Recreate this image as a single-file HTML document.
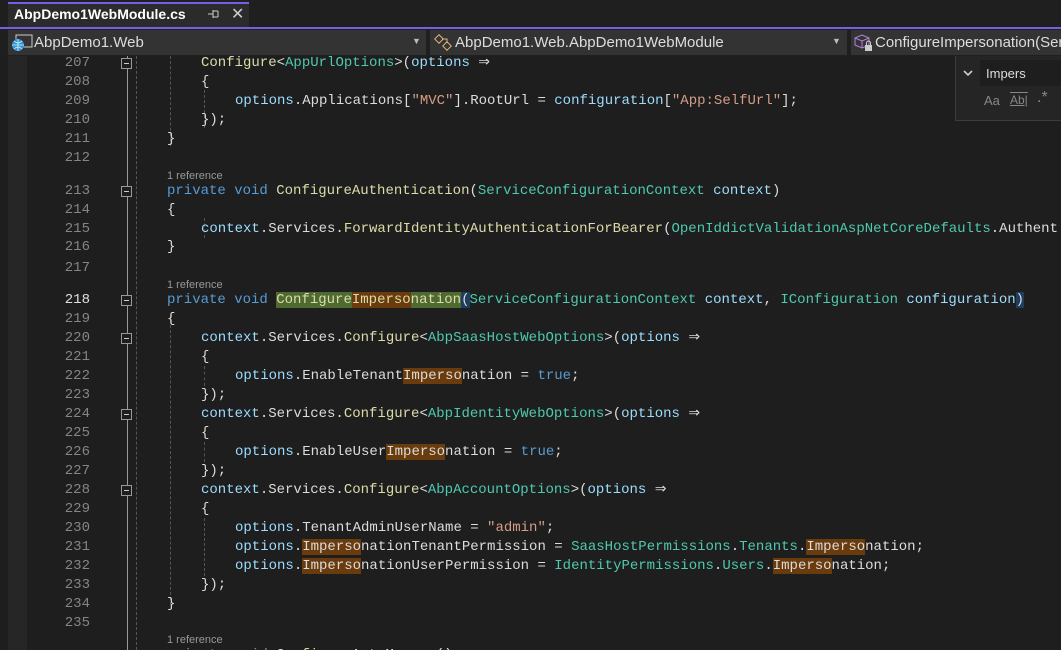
<!DOCTYPE html>
<html><head><meta charset="utf-8"><style>
*{margin:0;padding:0;box-sizing:border-box}
html,body{width:1061px;height:650px;overflow:hidden}
body{background:#1e1e1e;position:relative;font-family:"Liberation Sans",sans-serif}
.abs{position:absolute}
.ln{position:absolute;height:19px;line-height:19px;font-family:"Liberation Mono",monospace;font-size:14px;white-space:pre;color:#dcdcdc}
.num{position:absolute;width:60px;left:30px;text-align:right;height:19px;line-height:19px;font-family:"Liberation Mono",monospace;font-size:14px;color:#858585}
.k{color:#569cd6}.t{color:#4ec9b0}.m{color:#dcdcaa}.v{color:#9cdcfe}.s{color:#d69d85}
.hl{background:#6a3b0c}
.gr{background:#4e6a30}
.ref{position:absolute;left:167px;font-size:11px;color:#999;height:14px;line-height:14px}
.box{position:absolute;left:121px;width:11px;height:11px;border:1px solid #999;background:#1e1e1e}
.box:after{content:"";position:absolute;left:2px;top:4px;width:5px;height:1px;background:#ccc}
.dash{position:absolute;width:0;border-left:1px dashed #555}
</style></head><body>
<div class="abs" style="left:0;top:0;width:1061px;height:27px;background:#1f1f1f"></div>
<div class="abs" style="left:8px;top:2px;width:241px;height:26px;background:#2b2b2b;border-top:2px solid #7160e8"></div>
<div class="abs" style="left:14px;top:6px;font-size:14px;font-weight:bold;color:#fff">AbpDemo1WebModule.cs</div>
<svg class="abs" style="left:207px;top:9px" width="12" height="10"><path d="M1 5h5M6 1v8M6 2h5M6 8h5M11 2v6" stroke="#ccc" fill="none"/></svg>
<div class="abs" style="left:231px;top:4px;font-size:16px;color:#ccc">✕</div>
<div class="abs" style="left:0;top:27px;width:1061px;height:2px;background:#7160e8"></div>
<div class="abs" style="left:0;top:29px;width:1061px;height:27px;background:#1f1f1f"></div>
<div class="abs" style="left:8px;top:30px;width:418px;height:25px;background:#333"></div>
<div class="abs" style="left:430px;top:30px;width:417px;height:25px;background:#333"></div>
<div class="abs" style="left:851px;top:30px;width:210px;height:25px;background:#333"></div>
<svg class="abs" style="left:11px;top:34px" width="22" height="18"><rect x="5" y="1" width="16" height="12" fill="none" stroke="#ccc"/><circle cx="7" cy="11" r="6" fill="#3c8fd8"/><path d="M1 11h12M7 5v12M3 7q4 4 8 0M3 15q4-4 8 0" stroke="#bfe" stroke-width="0.8" fill="none"/></svg>
<div class="abs" style="left:34px;top:34px;font-size:15px;color:#ddd">AbpDemo1.Web</div>
<div class="abs" style="left:412px;top:36px;font-size:9px;color:#bbb">▼</div>
<svg class="abs" style="left:434px;top:33px" width="20" height="20"><rect x="2" y="3" width="6" height="6" transform="rotate(45 5 6)" fill="none" stroke="#dcb67a"/><rect x="10" y="10" width="6" height="6" transform="rotate(45 13 13)" fill="none" stroke="#dcb67a"/><path d="M8 6h5v4" stroke="#dcb67a" fill="none"/></svg>
<div class="abs" style="left:455px;top:34px;font-size:15px;color:#ddd">AbpDemo1.Web.AbpDemo1WebModule</div>
<div class="abs" style="left:832px;top:36px;font-size:9px;color:#bbb">▼</div>
<svg class="abs" style="left:853px;top:33px" width="22" height="20"><path d="M9 2l7 3v7l-7 3-7-3V5z M2 5l7 3 7-3M9 8v7" fill="none" stroke="#b180d7"/><rect x="12" y="12" width="7" height="6" fill="#ccc"/><path d="M13.5 12v-2a2 2 0 0 1 4 0v2" stroke="#ccc" fill="none"/></svg>
<div class="abs" style="left:875px;top:34px;font-size:15px;color:#ddd;white-space:nowrap">ConfigureImpersonation(Ser</div>
<div class="abs" style="left:8px;top:56px;width:19px;height:594px;background:#262626"></div>
<div class="abs" style="left:127px;top:56px;width:1px;height:594px;background:#999"></div>
<div class="dash" style="left:136px;top:56px;height:594px"></div>
<div class="dash" style="left:170px;top:56px;height:90px"></div>
<div class="dash" style="left:204px;top:90px;height:38px"></div>
<div class="dash" style="left:170px;top:315px;height:290px"></div>
<div class="dash" style="left:204px;top:366px;height:20px"></div>
<div class="dash" style="left:204px;top:442px;height:20px"></div>
<div class="dash" style="left:204px;top:518px;height:58px"></div>
<div class="dash" style="left:204px;top:218px;height:20px"></div>
<div class="box" style="top:58px"></div>
<div class="box" style="top:186px"></div>
<div class="box" style="top:295px"></div>
<div class="box" style="top:333px"></div>
<div class="box" style="top:409px"></div>
<div class="box" style="top:485px"></div>

<div class="num" style="top:54px">207</div>
<div class="num" style="top:73px">208</div>
<div class="num" style="top:92px">209</div>
<div class="num" style="top:111px">210</div>
<div class="num" style="top:130px">211</div>
<div class="num" style="top:149px">212</div>
<div class="num" style="top:182px">213</div>
<div class="num" style="top:201px">214</div>
<div class="num" style="top:220px">215</div>
<div class="num" style="top:238px">216</div>
<div class="num" style="top:259px">217</div>
<div class="num" style="top:291px;color:#e0e0e0">218</div>
<div class="num" style="top:310px">219</div>
<div class="num" style="top:329px">220</div>
<div class="num" style="top:348px">221</div>
<div class="num" style="top:367px">222</div>
<div class="num" style="top:386px">223</div>
<div class="num" style="top:405px">224</div>
<div class="num" style="top:424px">225</div>
<div class="num" style="top:443px">226</div>
<div class="num" style="top:462px">227</div>
<div class="num" style="top:481px">228</div>
<div class="num" style="top:500px">229</div>
<div class="num" style="top:519px">230</div>
<div class="num" style="top:538px">231</div>
<div class="num" style="top:557px">232</div>
<div class="num" style="top:576px">233</div>
<div class="num" style="top:595px">234</div>
<div class="num" style="top:614px">235</div>

<div class="ln" style="left:201px;top:54px"><span class="m">Configure</span>&lt;<span class="t">AppUrlOptions</span>&gt;(<span class="v">options</span> ⇒</div>
<div class="ln" style="left:201px;top:73px">{</div>
<div class="ln" style="left:235px;top:92px"><span class="v">options</span>.Applications[<span class="s">"MVC"</span>].RootUrl = <span class="v">configuration</span>[<span class="s">"App:SelfUrl"</span>];</div>
<div class="ln" style="left:201px;top:111px">});</div>
<div class="ln" style="left:167px;top:130px">}</div>
<div class="ref" style="top:169px">1 reference</div>
<div class="ln" style="left:167px;top:182px"><span class="k">private</span> <span class="k">void</span> <span class="m">ConfigureAuthentication</span>(<span class="t">ServiceConfigurationContext</span> <span class="v">context</span>)</div>
<div class="ln" style="left:167px;top:201px">{</div>
<div class="ln" style="left:201px;top:220px"><span class="v">context</span>.Services.<span class="m">ForwardIdentityAuthenticationForBearer</span>(<span class="t">OpenIddictValidationAspNetCoreDefaults</span>.Authent</div>
<div class="ln" style="left:167px;top:238px">}</div>
<div class="ref" style="top:278px">1 reference</div>
<div class="ln" style="left:167px;top:291px"><span class="k">private</span> <span class="k">void</span> <span class="m gr">Configure</span><span class="m hl">Imperso</span><span class="m gr">nation</span><span style="background:#1f3d5e">(</span><span class="t">ServiceConfigurationContext</span> <span class="v">context</span>, <span class="t">IConfiguration</span> <span class="v">configuration</span><span style="background:#1f3d5e">)</span></div>
<div class="ln" style="left:167px;top:310px">{</div>
<div class="ln" style="left:201px;top:329px"><span class="v">context</span>.Services.<span class="m">Configure</span>&lt;<span class="t">AbpSaasHostWebOptions</span>&gt;(<span class="v">options</span> ⇒</div>
<div class="ln" style="left:201px;top:348px">{</div>
<div class="ln" style="left:235px;top:367px"><span class="v">options</span>.EnableTenant<span class="hl">Imperso</span>nation = <span class="k">true</span>;</div>
<div class="ln" style="left:201px;top:386px">});</div>
<div class="ln" style="left:201px;top:405px"><span class="v">context</span>.Services.<span class="m">Configure</span>&lt;<span class="t">AbpIdentityWebOptions</span>&gt;(<span class="v">options</span> ⇒</div>
<div class="ln" style="left:201px;top:424px">{</div>
<div class="ln" style="left:235px;top:443px"><span class="v">options</span>.EnableUser<span class="hl">Imperso</span>nation = <span class="k">true</span>;</div>
<div class="ln" style="left:201px;top:462px">});</div>
<div class="ln" style="left:201px;top:481px"><span class="v">context</span>.Services.<span class="m">Configure</span>&lt;<span class="t">AbpAccountOptions</span>&gt;(<span class="v">options</span> ⇒</div>
<div class="ln" style="left:201px;top:500px">{</div>
<div class="ln" style="left:235px;top:519px"><span class="v">options</span>.TenantAdminUserName = <span class="s">"admin"</span>;</div>
<div class="ln" style="left:235px;top:538px"><span class="v">options</span>.<span class="hl">Imperso</span>nationTenantPermission = <span class="t">SaasHostPermissions</span>.<span class="t">Tenants</span>.<span class="hl">Imperso</span>nation;</div>
<div class="ln" style="left:235px;top:557px"><span class="v">options</span>.<span class="hl">Imperso</span>nationUserPermission = <span class="t">IdentityPermissions</span>.<span class="t">Users</span>.<span class="hl">Imperso</span>nation;</div>
<div class="ln" style="left:201px;top:576px">});</div>
<div class="ln" style="left:167px;top:595px">}</div>
<div class="ref" style="top:633px">1 reference</div>
<div class="ln" style="left:167px;top:646px"><span class="k">private</span> <span class="k">void</span> <span class="m">ConfigureAutoMapper</span>()</div>

<div class="abs" style="left:955px;top:56px;width:106px;height:65px;background:#252526;border-left:1px solid #3c3c3c;border-bottom:1px solid #3c3c3c"></div>
<svg class="abs" style="left:963px;top:70px" width="10" height="7"><path d="M1 1l4 4 4-4" stroke="#ccc" stroke-width="1.6" fill="none"/></svg>
<div class="abs" style="left:980px;top:60px;width:81px;height:26px;background:#1e1e1e"></div>
<div class="abs" style="left:986px;top:66px;font-size:13px;color:#ddd">Impers</div>
<div class="abs" style="left:984px;top:93px;font-size:13px;color:#888">Aa</div>
<div class="abs" style="left:1010px;top:93px;font-size:12px;color:#888;text-decoration:underline overline">Ab|</div>
<div class="abs" style="left:1037px;top:89px;font-size:16px;color:#888">.*</div>
</body></html>
